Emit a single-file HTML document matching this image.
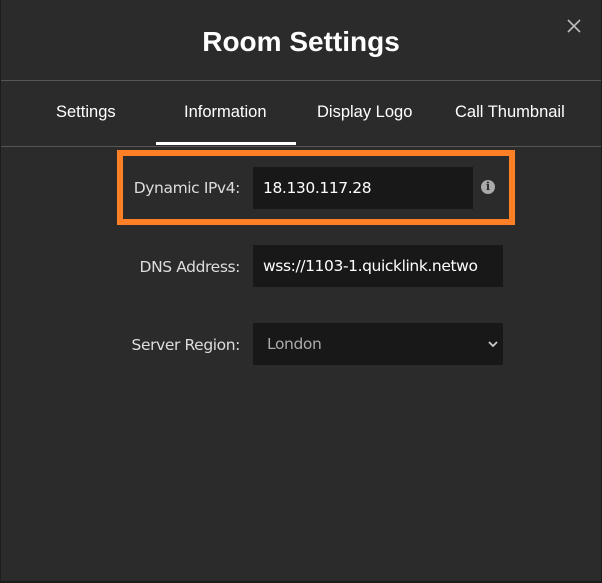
<!DOCTYPE html><html><head><style>
body{margin:0;width:602px;height:583px;background:#1c1c1c;font-family:"Liberation Sans",sans-serif;overflow:hidden}
.m{position:absolute;left:1px;top:0;width:600px;height:581px;background:#2b2b2b}
.t{position:absolute;left:0;width:602px;top:26px;text-align:center;color:#fff;font-size:28px;font-family:"Liberation Sans",sans-serif;font-weight:bold}
.x{position:absolute;left:565px;top:12px;color:#bbb;font-size:26px;font-family:"DejaVu Sans",sans-serif;font-weight:200}
.hr{position:absolute;left:1px;width:600px;height:1px;background:#555}
.tab{position:absolute;top:103px;color:#fff;font-size:16.5px}
.u{position:absolute;left:156px;top:142px;width:140px;height:3px;background:#fff}
.lbl{position:absolute;color:#ddd;text-align:right;width:130px;font-family:"DejaVu Sans",sans-serif;letter-spacing:-0.4px;font-size:15.5px}
.in{position:absolute;background:#181818;color:#fff;font-size:15.5px;font-family:"DejaVu Sans",sans-serif;letter-spacing:-0.4px;box-sizing:border-box;padding-left:10px;line-height:42px;height:42px;overflow:hidden;white-space:nowrap}
.box{position:absolute;left:117px;top:150px;width:398px;height:75px;box-sizing:border-box;border:6px solid #ff7f27}
</style></head><body><div class="m"></div>
<div class="t">Room Settings</div>
<svg style="position:absolute;left:566px;top:18px" width="16" height="16"><path d="M2 2l12 12M14 2L2 14" stroke="#bbb" stroke-width="1.6"/></svg>
<div class="hr" style="top:80px"></div>
<div class="hr" style="top:146px"></div>
<div class="tab" style="left:56px">Settings</div>
<div class="tab" style="left:184px">Information</div>
<div class="tab" style="left:317px">Display Logo</div>
<div class="tab" style="left:455px">Call Thumbnail</div>
<div class="u"></div>
<div class="box"></div>
<div class="lbl" style="left:110px;top:179px">Dynamic IPv4:</div>
<div class="in" style="left:253px;top:167px;width:220px">18.130.117.28</div>
<div style="position:absolute;left:481px;top:180px;width:14px;height:14px;border-radius:50%;background:#aaa;color:#2b2b2b;font-size:11px;font-weight:bold;text-align:center;line-height:14px;font-family:'DejaVu Serif',serif">i</div>
<div class="lbl" style="left:110px;top:258px">DNS Address:</div>
<div class="in" style="left:253px;top:245px;width:250px">wss://1103-1.quicklink.netwo</div>
<div class="lbl" style="left:110px;top:336px">Server Region:</div>
<div class="in" style="left:253px;top:323px;width:250px;color:#aaa;padding-left:14px">London</div>
<svg style="position:absolute;left:488px;top:340px" width="10" height="8"><path d="M1 2l4 4 4-4" stroke="#ccc" stroke-width="1.8" fill="none"/></svg>
</body></html>
